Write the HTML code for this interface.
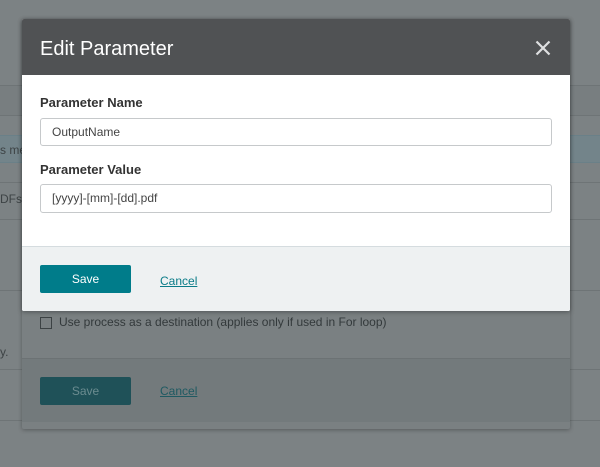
<!DOCTYPE html>
<html><head><style>
*{margin:0;padding:0;box-sizing:border-box}
body{width:600px;height:467px;overflow:hidden;background:#7c8284;font-family:"Liberation Sans",sans-serif;position:relative}
.a{position:absolute}
.ln{position:absolute;left:0;width:600px;height:1px;background:#6e7476}
</style></head><body>
<div class="a" style="left:0;top:85px;width:600px;height:31px;background:#787e80"></div>
<div class="ln" style="top:85px"></div>
<div class="ln" style="top:115px"></div>
<div class="a" style="left:0;top:135px;width:600px;height:28px;background:#73848a;border-top:1px solid #6a8088;border-bottom:1px solid #6a8088"></div>
<div class="a" style="left:0;top:143px;font-size:12px;color:#3d4345">s me</div>
<div class="ln" style="top:182px"></div>
<div class="a" style="left:0;top:192px;font-size:12px;color:#3d4345">DFs!</div>
<div class="ln" style="top:219px"></div>
<div class="ln" style="top:290px"></div>
<div class="ln" style="top:369px"></div>
<div class="ln" style="top:420px"></div>
<div class="a" style="left:0;top:345px;font-size:12px;color:#3d4345">y.</div>
<div class="a" style="left:22px;top:19px;width:548px;height:410px;background:#7a8082;box-shadow:0 1px 4px rgba(0,0,0,.3);border-radius:2px"></div>
<div class="a" style="left:22px;top:358px;width:548px;height:64px;background:#737a7c;border-top:1px solid #6c7274"></div>
<div class="a" style="left:40px;top:317px;width:12px;height:12px;border:1px solid #3c4244"></div>
<div class="a" style="left:59px;top:315px;font-size:12px;color:#33393b">Use process as a destination (applies only if used in For loop)</div>
<div class="a" style="left:40px;top:377px;width:91px;height:28px;background:#1f5158;border-radius:2px;color:#6b8c90;font-size:12px;text-align:center;line-height:28px">Save</div>
<div class="a" style="left:160px;top:384px;font-size:12px;color:#1f5a62;text-decoration:underline">Cancel</div>

<div class="a" style="left:22px;top:19px;width:548px;height:292px;background:#fff;box-shadow:0 1px 5px rgba(0,0,0,.35);border-radius:2px;overflow:hidden">
 <div class="a" style="left:0;top:0;width:548px;height:56px;background:#505254"></div>
 <div class="a" style="left:18px;top:19px;font-size:20px;color:#fff">Edit Parameter</div>
 <svg class="a" style="left:513px;top:21px" width="16" height="16" viewBox="0 0 16 16"><path d="M1.5 1.5L14.5 14.5M14.5 1.5L1.5 14.5" stroke="#dfe0e1" stroke-width="2.2"/></svg>
 <div class="a" style="left:18px;top:76px;font-size:13px;font-weight:bold;color:#333">Parameter Name</div>
 <div class="a" style="left:18px;top:99px;width:512px;height:28px;border:1px solid #c6c9cb;border-radius:3px;padding-left:11px;line-height:26px;font-size:12px;color:#444">OutputName</div>
 <div class="a" style="left:18px;top:143px;font-size:13px;font-weight:bold;color:#333">Parameter Value</div>
 <div class="a" style="left:18px;top:165px;width:512px;height:29px;border:1px solid #c6c9cb;border-radius:3px;padding-left:11px;line-height:27px;font-size:12px;color:#444">[yyyy]-[mm]-[dd].pdf</div>
 <div class="a" style="left:0;top:227px;width:548px;height:65px;background:#eef1f2;border-top:1px solid #d5dcdf"></div>
 <div class="a" style="left:18px;top:246px;width:91px;height:28px;background:#007c8a;border-radius:2px;color:#fff;font-size:12px;text-align:center;line-height:28px">Save</div>
 <div class="a" style="left:138px;top:255px;font-size:12px;color:#0a7c88;text-decoration:underline">Cancel</div>
</div>
</body></html>
